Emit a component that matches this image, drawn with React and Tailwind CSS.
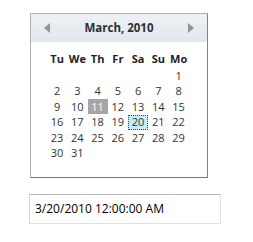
const days = ['Tu', 'We', 'Th', 'Fr', 'Sa', 'Su', 'Mo'];

const weeks = [
  [null, null, null, null, null, null, 1],
  [2, 3, 4, 5, 6, 7, 8],
  [9, 10, 11, 12, 13, 14, 15],
  [16, 17, 18, 19, 20, 21, 22],
  [23, 24, 25, 26, 27, 28, 29],
  [30, 31, null, null, null, null, null],
];

const DayCell = ({ day }) => {
  if (day === 11) {
    return (
      <div className="h-[15.5px] flex items-center justify-center">
        <div className="w-[21px] h-[15px] bg-[#a6a6a6] text-white flex items-center justify-center">{day}</div>
      </div>
    );
  }
  if (day === 20) {
    return (
      <div className="h-[15.5px] flex items-center justify-center">
        <div className="w-[21px] h-[15px] bg-[#c6ecf6] border border-dotted border-[#3d4a52] flex items-center justify-center">
          {day}
        </div>
      </div>
    );
  }
  return <div className="h-[15.5px] flex items-center justify-center">{day ?? ''}</div>;
};

export default function App() {
  return (
    <div
      className="w-[253px] h-[242px] bg-white relative overflow-hidden"
      style={{ fontFamily: '"Open Sans", "Noto Sans", sans-serif' }}
    >
      <div className="pt-[13px] pl-[30px]">
        <div className="w-[178px] h-[165px] border border-[#a9b3bd] border-r-[#7c858e] border-b-[#6f7780] bg-white">
          <div className="h-[28px] bg-gradient-to-b from-[#eef1f5] to-[#e2e7ed] flex items-center justify-between px-[13px]">
            <svg width="7" height="10" viewBox="0 0 7 10">
              <polygon points="6,0 6,10 0,5" fill="#8e959c" />
            </svg>
            <span className="text-[11.5px] font-bold text-[#2b2f33]">March, 2010</span>
            <svg width="7" height="10" viewBox="0 0 7 10">
              <polygon points="1,0 1,10 7,5" fill="#8e959c" />
            </svg>
          </div>
          <div className="pl-[16px] pt-[9px]">
            <div className="grid grid-cols-[repeat(7,20.25px)] text-[11px] font-bold text-[#222] h-[16px] items-center">
              {days.map((d) => (
                <div key={d} className="text-center">
                  {d}
                </div>
              ))}
            </div>
            <div className="grid grid-cols-[repeat(7,20.25px)] text-[11px] text-[#333] mt-[1px]">
              {weeks.flat().map((d, i) => (
                <DayCell key={i} day={d} />
              ))}
            </div>
          </div>
        </div>
      </div>
      <div className="pl-[29px] pt-[16px]">
        <div className="w-[192px] h-[30px] border border-[#dde2e7] border-t-[#b5b9bd] border-l-[#d3d7db] flex items-center pl-[5px] text-[12px] text-black">
          3/20/2010 12:00:00 AM
        </div>
      </div>
    </div>
  );
}
